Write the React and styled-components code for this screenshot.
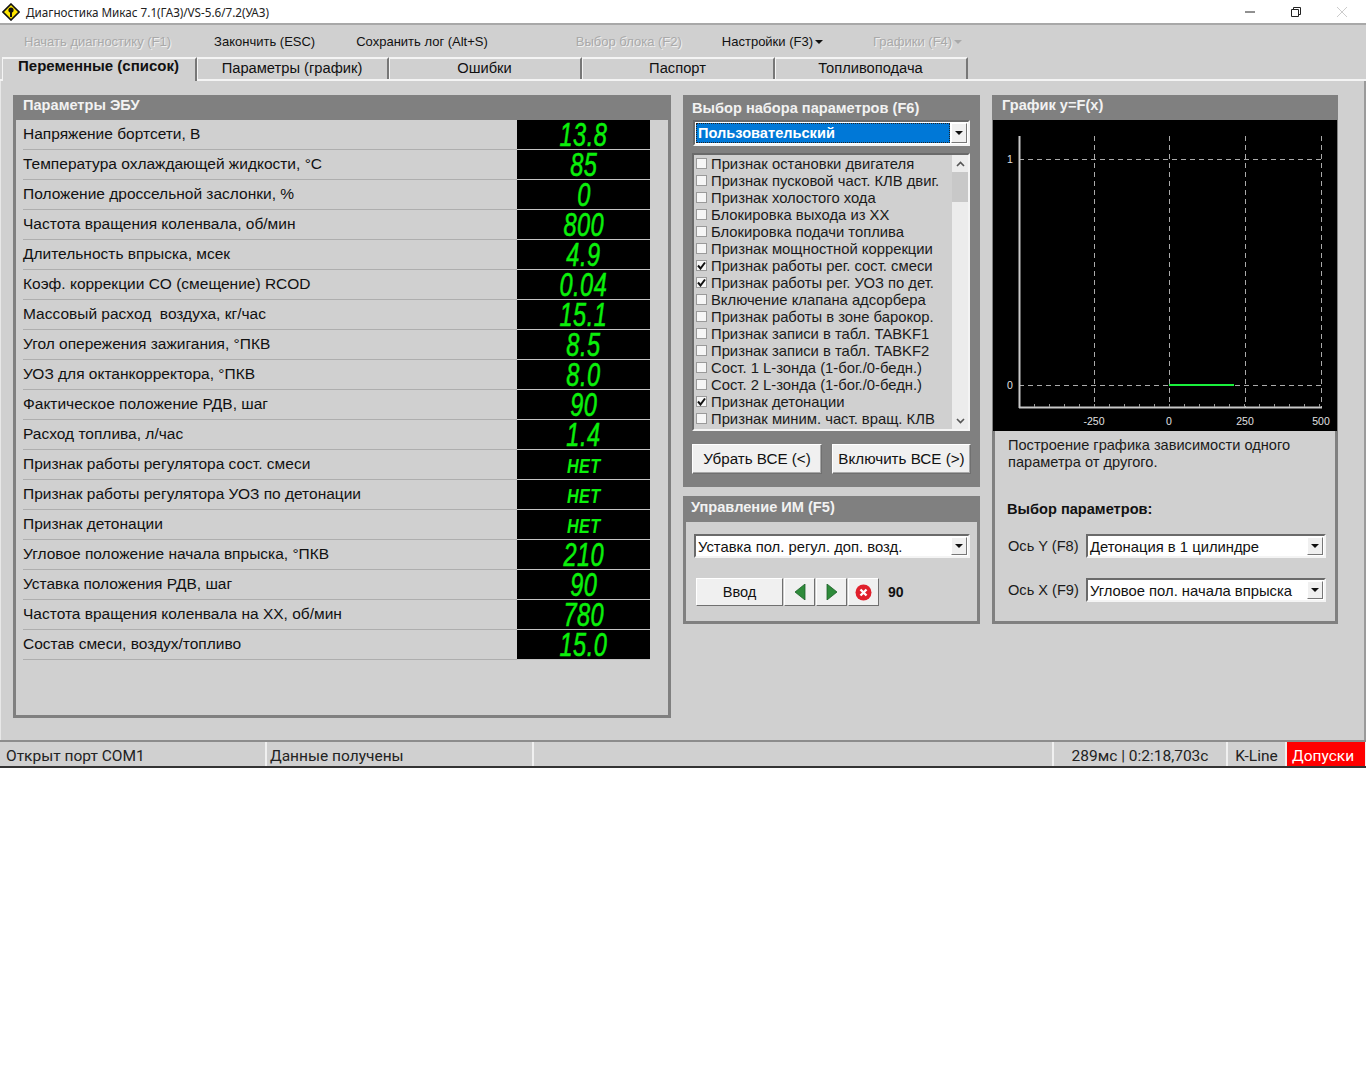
import styled, { createGlobalStyle } from "styled-components"

const GlobalStyle = createGlobalStyle`
    body {
        margin: 0;
        background: #fff;
        font-family: "Liberation Sans", Arial, sans-serif;
        color: #111;
    }
`

const Window = styled.div`
    width: 1366px;
    height: 768px;
    display: flex;
    flex-direction: column;
    background: #d0d0d0;
`

// title bar
const TitleBar = styled.div`
    height: 23px;
    background: #fff;
    border-bottom: 2px solid #a8a8a8;
    display: flex;
    align-items: center;
    padding-left: 2px;
    flex: none;
`
const TitleText = styled.span`
    font: 11.7px "Noto Sans", "Open Sans", sans-serif;
    margin-left: 6px;
    color: #222;
`
const WinButtons = styled.div`
    margin-left: auto;
    display: flex;
    align-items: center;
    padding-right: 1px;
`
const WinButton = styled.div`
    width: 46px;
    height: 22px;
    display: flex;
    align-items: center;
    justify-content: center;
`

// toolbar
const Toolbar = styled.div`
    height: 32px;
    display: flex;
    align-items: center;
    flex: none;
    padding-top: 1px;
    box-sizing: border-box;
`
const ToolButton = styled.span`
    margin-left: ${(p) => p.$gap}px;
    font-size: 13px;
    white-space: nowrap;
    color: ${(p) => (p.$off ? "#a9a9a9" : "#111")};
    text-shadow: ${(p) => (p.$off ? "1px 1px 0 #f0f0f0" : "none")};
    display: flex;
    align-items: center;
`
const Caret = styled.i`
    display: inline-block;
    margin-left: 2px;
    border-left: 4px solid transparent;
    border-right: 4px solid transparent;
    border-top: 4px solid ${(p) => (p.$off ? "#a9a9a9" : "#111")};
`

// tabs
const TabRow = styled.div`
    height: 24px;
    display: flex;
    align-items: flex-end;
    padding-left: 2px;
    flex: none;
    box-sizing: border-box;
    border-bottom: 2px solid #f4f4f4;
`
const Tab = styled.div`
    width: ${(p) => p.$w}px;
    height: ${(p) => (p.$active ? 24 : 22)}px;
    margin-bottom: ${(p) => (p.$active ? -2 : 0)}px;
    box-sizing: border-box;
    border-top: 2px solid #f4f4f4;
    border-left: 1px solid #f4f4f4;
    border-right: 2px solid #777;
    background: #d0d0d0;
    position: relative;
    text-align: center;
    font-size: ${(p) => (p.$active ? 15 : 14.7)}px;
    font-weight: ${(p) => (p.$active ? 700 : 400)};
    line-height: ${(p) => (p.$active ? 12 : 16)}px;
    padding: 1px 1px 0 0;
    white-space: nowrap;
`

// page
const Page = styled.div`
    flex: 1;
    display: flex;
    gap: 12px;
    padding: 14px 0 0 12px;
    border-right: 2px solid #9a9a9a;
    border-left: 1px solid #e8e8e8;
    box-sizing: border-box;
    align-items: flex-start;
`
const Column = styled.div`
    width: 297px;
    display: flex;
    flex-direction: column;
    gap: 9px;
`
const Panel = styled.section`
    width: ${(p) => p.$w}px;
    height: ${(p) => p.$h}px;
    box-sizing: border-box;
    border: 3px solid #808080;
    border-top: 0;
    background: ${(p) => (p.$dark ? "#808080" : "#d0d0d0")};
`
const PanelHead = styled.h2`
    margin: 0 -3px;
    height: ${(p) => p.$h || 25}px;
    background: #808080;
    color: #f2f2f2;
    font-size: 14.6px;
    font-weight: 700;
    line-height: ${(p) => p.$line || 20}px;
    padding-left: ${(p) => p.$pad || 10}px;
    box-sizing: border-box;
`

// params table
const Row = styled.div`
    display: flex;
    height: 30px;
`
const RowLabel = styled.div`
    width: 494px;
    margin-left: 7px;
    border-bottom: 1px solid #aeaeae;
    font-size: 15.5px;
    line-height: 28px;
    white-space: pre;
`
const RowValue = styled.div`
    width: 133px;
    height: 29px;
    background: #000;
    border-bottom: 1px solid #c4c4c4;
    display: flex;
    align-items: center;
    justify-content: center;
`
// цифры индикатора: обычный текст, растянутый по высоте
const ValueText = styled.span`
    color: #0bf00b;
    font-style: italic;
    font-weight: ${(p) => (p.$word ? 700 : 400)};
    font-size: ${(p) => (p.$word ? 17 : 24)}px;
    line-height: 24px;
    letter-spacing: 0.5px;
    -webkit-text-stroke: ${(p) => (p.$word ? 0 : 0.4)}px #0bf00b;
    transform: ${(p) => (p.$word ? "translateY(2px) scale(0.95, 1.2)" : "scale(0.98, 1.38)")};
`

// middle column
const ComboWrap = styled.div`
    height: ${(p) => p.$h}px;
    margin: ${(p) => p.$m};
    width: ${(p) => p.$w}px;
    box-sizing: border-box;
    background: #fff;
    border: 2px solid;
    border-color: #6a6a6a #f4f4f4 #f4f4f4 #6a6a6a;
    display: flex;
    align-items: stretch;
    flex: none;
`
const ComboText = styled.div`
    flex: 1;
    font-size: 14.8px;
    line-height: 23px;
    padding-left: 2px;
    white-space: nowrap;
    overflow: hidden;
`
const ComboSelected = styled(ComboText)`
    background: #0078d7;
    color: #fff;
    font-weight: 700;
    font-size: 14.6px;
    line-height: 20px;
    outline: 1px dotted #222;
    outline-offset: -1px;
    margin: 1px 0 1px 1px;
`
const ComboArrow = styled.div`
    width: 16px;
    margin: 1px;
    background: #f0f0f0;
    border: 1px solid;
    border-color: #fff #777 #777 #fff;
    box-sizing: border-box;
    display: flex;
    align-items: center;
    justify-content: center;
    &::after {
        content: "";
        border-left: 4px solid transparent;
        border-right: 4px solid transparent;
        border-top: 4px solid #111;
    }
`
const CheckList = styled.div`
    margin: 7px 0 0 6px;
    width: 278px;
    height: 278px;
    box-sizing: border-box;
    background: #d0d0d0;
    border: 2px solid;
    border-color: #6a6a6a #f4f4f4 #f4f4f4 #6a6a6a;
    display: flex;
`
const CheckItems = styled.div`
    flex: 1;
    padding: 0 0 0 2px;
`
const CheckRow = styled.div`
    height: 17px;
    display: flex;
    align-items: center;
    font-size: 14.8px;
    white-space: nowrap;
    color: #1a1a1a;
`
const CheckBox = styled.span`
    width: 11px;
    height: 11px;
    box-sizing: border-box;
    background: #f6f6f6;
    border: 1px solid #9a9a9a;
    margin-right: 4px;
    display: flex;
    align-items: center;
    justify-content: center;
    flex: none;
`
const ScrollBar = styled.div`
    width: 16px;
    background: #ececec;
    display: flex;
    flex-direction: column;
`
const ScrollEnd = styled.div`
    height: 17px;
    display: flex;
    align-items: center;
    justify-content: center;
    flex: none;
`
const ScrollThumb = styled.div`
    height: 30px;
    background: #c8c8c8;
`
const ScrollTrack = styled.div`
    flex: 1;
`
const ButtonRow = styled.div`
    display: flex;
    gap: 10px;
    margin: 13px 0 0 6px;
`
const Button = styled.div`
    width: ${(p) => p.$w}px;
    height: 30px;
    box-sizing: border-box;
    background: #f0f0f0;
    border: 1px solid;
    border-color: #fff #707070 #707070 #fff;
    box-shadow: inset -1px -1px 0 #a8a8a8;
    text-align: center;
    font-size: 15.2px;
    line-height: 28px;
    white-space: nowrap;
`
const ControlRow = styled.div`
    display: flex;
    align-items: center;
    margin: 20px 0 0 10px;
    gap: 1px;
`
const ControlButton = styled.div`
    width: ${(p) => p.$w}px;
    height: 28px;
    box-sizing: border-box;
    background: #f0f0f0;
    border: 1px solid;
    border-color: #fff #707070 #707070 #fff;
    display: flex;
    align-items: center;
    justify-content: center;
    font-size: 14.6px;
`
const ControlValue = styled.b`
    font-size: 14px;
    margin-left: 8px;
`

// right column
const Chart = styled.svg`
    display: block;
    margin-left: -2px;
    position: relative;
`
const Note = styled.p`
    margin: 6px 0 0 13px;
    font-size: 14.6px;
    line-height: 17px;
    color: #1a1a1a;
`
const Subtitle = styled.h3`
    margin: 30px 0 0 12px;
    font-size: 14.6px;
    font-weight: 700;
    line-height: 17px;
`
const AxisRow = styled.div`
    display: flex;
    align-items: center;
    height: 24px;
    margin-top: ${(p) => p.$top}px;
    padding-left: 13px;
`
const AxisLabel = styled.span`
    width: 78px;
    font-size: 14.6px;
    line-height: 29px;
    white-space: nowrap;
    color: #1a1a1a;
`

// status bar
const StatusBar = styled.div`
    height: 28px;
    flex: none;
    box-sizing: border-box;
    border-top: 2px solid #8c8c8c;
    border-bottom: 2px solid #333;
    display: flex;
    gap: 2px;
    background: #f0f0f0;
`
const StatusCell = styled.div`
    width: ${(p) => p.$w}px;
    background: ${(p) => (p.$alert ? "#ff0000" : "#d0d0d0")};
    color: ${(p) => (p.$alert ? "#fff" : "#222")};
    font: 15.5px "Roboto", sans-serif;
    line-height: 29px;
    padding: 0 ${(p) => p.$pad || 0}px;
    box-sizing: border-box;
    text-align: ${(p) => p.$align || "left"};
    white-space: nowrap;
    overflow: hidden;
`

const params = [
    ["Напряжение бортсети, В", "13.8"],
    ["Температура охлаждающей жидкости, °C", "85"],
    ["Положение дроссельной заслонки, %", "0"],
    ["Частота вращения коленвала, об/мин", "800"],
    ["Длительность впрыска, мсек", "4.9"],
    ["Коэф. коррекции CO (смещение) RCOD", "0.04"],
    ["Массовый расход  воздуха, кг/час", "15.1"],
    ["Угол опережения зажигания, °ПКВ", "8.5"],
    ["УОЗ для октанкорректора, °ПКВ", "8.0"],
    ["Фактическое положение РДВ, шаг", "90"],
    ["Расход топлива, л/час", "1.4"],
    ["Признак работы регулятора сост. смеси", "НЕТ", true],
    ["Признак работы регулятора УОЗ по детонации", "НЕТ", true],
    ["Признак детонации", "НЕТ", true],
    ["Угловое положение начала впрыска, °ПКВ", "210"],
    ["Уставка положения РДВ, шаг", "90"],
    ["Частота вращения коленвала на ХХ, об/мин", "780"],
    ["Состав смеси, воздух/топливо", "15.0"],
]

const checks = [
    ["Признак остановки двигателя"],
    ["Признак пусковой част. КЛВ двиг."],
    ["Признак холостого хода"],
    ["Блокировка выхода из ХХ"],
    ["Блокировка подачи топлива"],
    ["Признак мощностной коррекции"],
    ["Признак работы рег. сост. смеси", true],
    ["Признак работы рег. УОЗ по дет.", true],
    ["Включение клапана адсорбера"],
    ["Признак работы в зоне барокор."],
    ["Признак записи в табл. TABKF1"],
    ["Признак записи в табл. TABKF2"],
    ["Сост. 1 L-зонда (1-бог./0-бедн.)"],
    ["Сост. 2 L-зонда (1-бог./0-бедн.)"],
    ["Признак детонации", true],
    ["Признак миним. част. вращ. КЛВ"],
]

function AppIcon() {
    return (
        <svg width="18" height="18" viewBox="0 0 18 18">
            <path d="M9 1 L17 9 L9 17 L1 9 Z" fill="#ffe600" stroke="#111" strokeWidth="1.6" />
            <circle cx="9" cy="7" r="2.6" fill="#111" />
            <path d="M8 9h2v5H8z" fill="#111" />
        </svg>
    )
}

function Tick() {
    return (
        <svg width="9" height="9" viewBox="0 0 9 9">
            <path d="M1 4.5 L3.5 7.5 L8 1.5" fill="none" stroke="#111" strokeWidth="2" />
        </svg>
    )
}

function ScrollCaret({ down }) {
    return (
        <svg width="9" height="6" viewBox="0 0 9 6">
            <path d={down ? "M1 1 L4.5 4.5 L8 1" : "M1 5 L4.5 1.5 L8 5"} fill="none" stroke="#555" strokeWidth="1.6" />
        </svg>
    )
}

function Arrow({ left }) {
    return (
        <svg width="12" height="16" viewBox="0 0 12 16">
            <path d={left ? "M11 0 V16 L1 8 Z" : "M1 0 V16 L11 8 Z"} fill="#2e8b3a" stroke="#1d5f28" strokeWidth="0.8" />
        </svg>
    )
}

function StopIcon() {
    return (
        <svg width="17" height="17" viewBox="0 0 17 17">
            <circle cx="8.5" cy="8.5" r="8" fill="#e0202c" />
            <path d="M5.5 5.5 L11.5 11.5 M11.5 5.5 L5.5 11.5" stroke="#fff" strokeWidth="2.4" />
        </svg>
    )
}

function Combo({ text, w, h, m, selected }) {
    return (
        <ComboWrap $w={w} $h={h} $m={m}>
            {selected ? <ComboSelected>{text}</ComboSelected> : <ComboText>{text}</ComboText>}
            <ComboArrow />
        </ComboWrap>
    )
}

function GraphChart() {
    // график: координаты считаем от левого верхнего угла панели
    const xs = [101, 176, 252, 328]
    const ys = [39, 265]
    const labels = ["-250", "0", "250", "500"]
    const ticks = []
    for (let x = 41; x <= 328; x += 15) ticks.push(x)
    return (
        <Chart width="344" height="311" viewBox="0 0 344 311">
            <rect width="344" height="311" fill="#000" />
            {xs.map((x) => (
                <line key={x} x1={x + 0.5} x2={x + 0.5} y1="16" y2="287" stroke="#aaa" strokeDasharray="5 4" />
            ))}
            {ys.map((y) => (
                <line key={y} x1="26" x2="328" y1={y + 0.5} y2={y + 0.5} stroke="#aaa" strokeDasharray="5 4" />
            ))}
            <line x1="26.5" x2="26.5" y1="16" y2="288" stroke="#c8c8c8" strokeWidth="2" />
            <line x1="26" x2="329" y1="287.5" y2="287.5" stroke="#c8c8c8" strokeWidth="2" />
            {ticks.map((x) => (
                <line key={x} x1={x + 0.5} x2={x + 0.5} y1="284" y2="287" stroke="#999" />
            ))}
            <line x1="176" x2="241" y1="265" y2="265" stroke="#19f03c" strokeWidth="2" />
            {xs.map((x, i) => (
                <text key={x} x={x} y="305" fontSize="10.5" fill="#e0e0e0" textAnchor="middle" fontFamily="Liberation Sans">
                    {labels[i]}
                </text>
            ))}
            <text x="17" y="43" fontSize="10.5" fill="#e0e0e0" textAnchor="middle" fontFamily="Liberation Sans">1</text>
            <text x="17" y="269" fontSize="10.5" fill="#e0e0e0" textAnchor="middle" fontFamily="Liberation Sans">0</text>
        </Chart>
    )
}

export default function App() {
    return (
        <Window>
            <GlobalStyle />
            <TitleBar>
                <AppIcon />
                <TitleText>Диагностика Микас 7.1(ГАЗ)/VS-5.6/7.2(УАЗ)</TitleText>
                <WinButtons>
                    <WinButton>
                        <svg width="12" height="12" viewBox="0 0 12 12"><path d="M1 6h10" stroke="#222" /></svg>
                    </WinButton>
                    <WinButton>
                        <svg width="12" height="12" viewBox="0 0 12 12">
                            <path d="M1.5 3.5h7v7h-7zM3.5 3.5v-2h7v7h-2" fill="none" stroke="#222" />
                        </svg>
                    </WinButton>
                    <WinButton>
                        <svg width="12" height="12" viewBox="0 0 12 12"><path d="M1 1l10 10M11 1L1 11" stroke="#ccc" /></svg>
                    </WinButton>
                </WinButtons>
            </TitleBar>

            <Toolbar>
                <ToolButton $gap={24} $off>Начать диагностику (F1)</ToolButton>
                <ToolButton $gap={43}>Закончить (ESC)</ToolButton>
                <ToolButton $gap={41}>Сохранить лог (Alt+S)</ToolButton>
                <ToolButton $gap={88} $off>Выбор блока (F2)</ToolButton>
                <ToolButton $gap={40}>Настройки (F3)<Caret /></ToolButton>
                <ToolButton $gap={50} $off>Графики (F4)<Caret $off /></ToolButton>
            </Toolbar>

            <TabRow>
                <Tab $w={195} $active>Переменные (список)</Tab>
                <Tab $w={192}>Параметры (график)</Tab>
                <Tab $w={193}>Ошибки</Tab>
                <Tab $w={193}>Паспорт</Tab>
                <Tab $w={193}>Топливоподача</Tab>
            </TabRow>

            <Page>
                <Panel $w={658} $h={623}>
                    <PanelHead>Параметры ЭБУ</PanelHead>
                    {params.map(([label, value, word]) => (
                        <Row key={label}>
                            <RowLabel>{label}</RowLabel>
                            <RowValue><ValueText $word={word}>{value}</ValueText></RowValue>
                        </Row>
                    ))}
                </Panel>

                <Column>
                    <Panel $w={297} $h={392} $dark>
                        <PanelHead $pad={9} $line={26}>Выбор набора параметров (F6)</PanelHead>
                        <Combo text="Пользовательский" w={277} h={26} m="0 0 0 7px" selected />
                        <CheckList>
                            <CheckItems>
                                {checks.map(([text, on]) => (
                                    <CheckRow key={text}>
                                        <CheckBox>{on && <Tick />}</CheckBox>
                                        {text}
                                    </CheckRow>
                                ))}
                            </CheckItems>
                            <ScrollBar>
                                <ScrollEnd><ScrollCaret /></ScrollEnd>
                                <ScrollThumb />
                                <ScrollTrack />
                                <ScrollEnd><ScrollCaret down /></ScrollEnd>
                            </ScrollBar>
                        </CheckList>
                        <ButtonRow>
                            <Button $w={130}>Убрать ВСЕ (&lt;)</Button>
                            <Button $w={139}>Включить ВСЕ (&gt;)</Button>
                        </ButtonRow>
                    </Panel>

                    <Panel $w={297} $h={128}>
                        <PanelHead $h={26} $pad={8} $line={22}>Управление ИМ (F5)</PanelHead>
                        <Combo text="Уставка пол. регул. доп. возд." w={276} h={24} m="12px 0 0 8px" />
                        <ControlRow>
                            <ControlButton $w={87}>Ввод</ControlButton>
                            <ControlButton $w={31}><Arrow left /></ControlButton>
                            <ControlButton $w={31}><Arrow /></ControlButton>
                            <ControlButton $w={31}><StopIcon /></ControlButton>
                            <ControlValue>90</ControlValue>
                        </ControlRow>
                    </Panel>
                </Column>

                <Panel $w={346} $h={529}>
                    <PanelHead>График y=F(x)</PanelHead>
                    <GraphChart />
                    <Note>Построение графика зависимости одного<br />параметра от другого.</Note>
                    <Subtitle>Выбор параметров:</Subtitle>
                    <AxisRow $top={16}>
                        <AxisLabel>Ось Y (F8)</AxisLabel>
                        <Combo text="Детонация в 1 цилиндре" w={240} h={24} m="0" />
                    </AxisRow>
                    <AxisRow $top={20}>
                        <AxisLabel>Ось X (F9)</AxisLabel>
                        <Combo text="Угловое пол. начала впрыска" w={240} h={24} m="0" />
                    </AxisRow>
                </Panel>
            </Page>

            <StatusBar>
                <StatusCell $w={265} $pad={6}>Открыт порт COM1</StatusCell>
                <StatusCell $w={265} $pad={3}>Данные получены</StatusCell>
                <StatusCell $w={518} />
                <StatusCell $w={172} $align="center">289мс | 0:2:18,703с</StatusCell>
                <StatusCell $w={57} $align="center">K-Line</StatusCell>
                <StatusCell $w={78} $pad={5} $alert>Допуски</StatusCell>
            </StatusBar>
        </Window>
    )
}
